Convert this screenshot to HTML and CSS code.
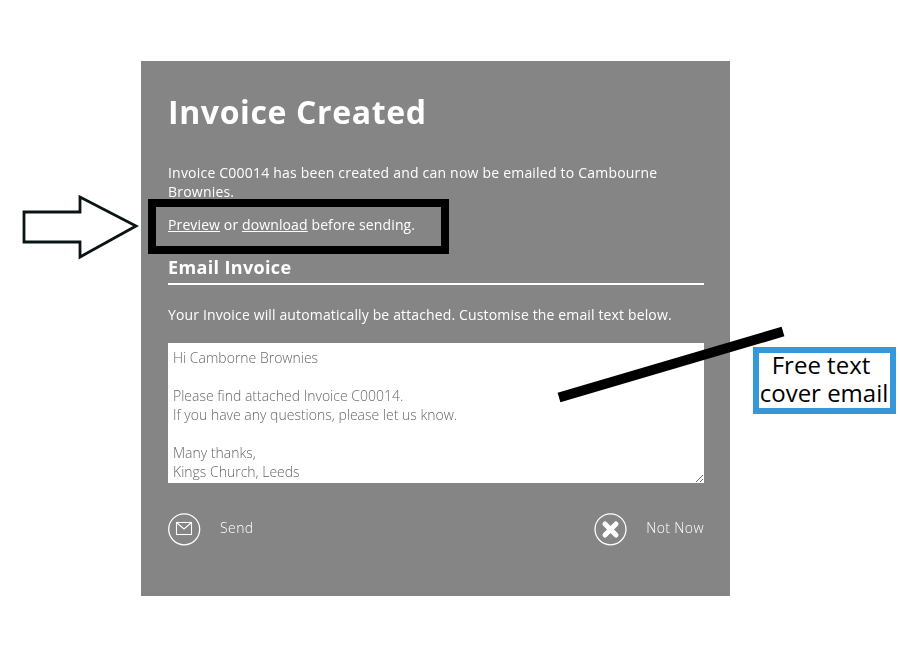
FILE: index.html
```html
<!DOCTYPE html>
<html lang="en">
<head>
<meta charset="utf-8">
<title>Invoice Created</title>
<link rel="stylesheet" href="styles.css">
</head>
<body>
<main class="panel">
  <h1 class="title">Invoice Created</h1>
  <p class="intro">Invoice C00014 has been created and can now be emailed to Cambourne Brownies.</p>
  <p class="links"><a href="#">Preview</a> or <a href="#">download</a> before sending.</p>
  <h2 class="subtitle">Email Invoice</h2>
  <p class="hint">Your Invoice will automatically be attached. Customise the email text below.</p>
  <textarea class="message">Hi Camborne Brownies

Please find attached Invoice C00014.
If you have any questions, please let us know.

Many thanks,
Kings Church, Leeds</textarea>
  <div class="actions">
    <a class="action action-send" href="#">
      <svg class="action-icon" viewBox="0 0 33 33" width="33" height="33" aria-hidden="true">
        <circle cx="16.2" cy="16.3" r="15.5" fill="none" stroke="#fff" stroke-width="1.3"/>
        <rect x="8.5" y="9.5" width="15" height="12" fill="none" stroke="#fff" stroke-width="1.1"/>
        <path d="M8.5 9.5 L16 16 L23.5 9.5" fill="none" stroke="#fff" stroke-width="1.1"/>
      </svg>
      <span class="action-label">Send</span>
    </a>
    <a class="action action-skip" href="#">
      <svg class="action-icon" viewBox="0 0 33 33" width="33" height="33" aria-hidden="true">
        <circle cx="16.5" cy="16.3" r="15.5" fill="none" stroke="#fff" stroke-width="1.3"/>
        <path d="M11 11 L22 22 M22 11 L11 22" fill="none" stroke="#fff" stroke-width="5" stroke-linecap="round"/>
      </svg>
      <span class="action-label">Not Now</span>
    </a>
  </div>
</main>

<div class="highlight-box"></div>
<svg class="overlay" viewBox="0 0 900 660" width="900" height="660" aria-hidden="true">
  <path d="M24 212 H80 V197 L136 226 L80 257 V242 H24 Z" fill="#fff" stroke="#0a1414" stroke-width="2.8"/>
  <path d="M559 397.5 L783 331.5" fill="none" stroke="#000" stroke-width="10"/>
</svg>
<div class="callout"><div class="callout-text"><span class="callout-first">Free text</span><br>cover email</div></div>
</body>
</html>
```

FILE: styles.css
```css
* { box-sizing: border-box; }

html, body { background: #fff; }

body {
  margin: 0;
  padding: 61px 0 0 141px;
  height: 660px;
  overflow: hidden;
  font-family: "Open Sans", "Liberation Sans", sans-serif;
}

.panel {
  width: 589px;
  height: 535px;
  padding: 29px 26px 0 27px;
  background: #858585;
  color: #fff;
  font-size: 14px;
  line-height: 19px;
  letter-spacing: 0.14px;
}

.title {
  margin: 0 0 29px;
  font-size: 32px;
  line-height: 44px;
  font-weight: 700;
  letter-spacing: 0.62px;
}

.intro {
  margin: 0 0 14px;
  letter-spacing: 0.21px;
}

.links {
  margin: 0 0 21px;
  letter-spacing: 0.12px;
}

.links a { color: #fff; }

.subtitle {
  margin: 0 0 20px;
  padding-bottom: 4px;
  border-bottom: 2px solid #fff;
  font-size: 18px;
  line-height: 24px;
  font-weight: 700;
  letter-spacing: 0.35px;
}

.hint { margin: 0 0 19px; }

.message {
  display: block;
  width: 536px;
  height: 140px;
  padding: 5px;
  border: 0;
  border-radius: 0;
  outline: 0;
  background: #fff;
  color: #666;
  font-family: inherit;
  font-size: 14px;
  font-weight: 300;
  line-height: 19px;
  letter-spacing: 0;
}

.actions {
  display: flex;
  justify-content: space-between;
  margin-top: 30px;
}

.action {
  display: flex;
  align-items: center;
  color: #fff;
  text-decoration: none;
  font-weight: 300;
  letter-spacing: 0.4px;
}

.action-label { margin-bottom: 4px; }

.action-icon { display: block; }

.action-send { gap: 19px; }
.action-skip { gap: 19px; }

.highlight-box {
  position: absolute;
  left: 148px;
  top: 199px;
  width: 301px;
  height: 55px;
  border: 8px solid #000;
}

.overlay {
  position: absolute;
  left: 0;
  top: 0;
  pointer-events: none;
}

.callout {
  position: absolute;
  left: 753px;
  top: 347px;
  width: 143px;
  height: 67px;
  border: 6px solid #3498db;
  background: #fff;
  color: #000;
  font-size: 24px;
  line-height: 28px;
  text-align: center;
  letter-spacing: 0;
  white-space: nowrap;
}

.callout-text { margin: -2px 0 0 -1px; }

.callout-first {
  display: inline-block;
  padding-right: 6px;
}
```
